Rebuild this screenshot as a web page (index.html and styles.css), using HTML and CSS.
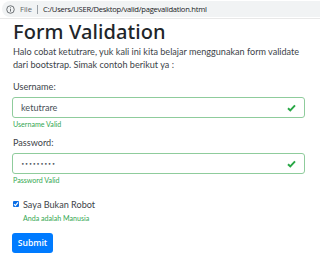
FILE: index.html
```html
<!DOCTYPE html>
<html>
<head>
<meta charset="utf-8">
<link rel="stylesheet" href="styles.css">
</head>
<body>
<div class="addrbar">
  <div class="pill">
    <svg class="info" width="9" height="9" viewBox="0 0 10 10"><circle cx="5" cy="5" r="4.2" fill="none" stroke="#5f6368" stroke-width="1"/><rect x="4.5" y="4.3" width="1" height="3" fill="#5f6368"/><rect x="4.5" y="2.6" width="1" height="1" fill="#5f6368"/></svg>
    <span class="scheme">File</span>
    <span class="sep"></span>
    <span class="url">C:/Users/USER/Desktop/valid/pagevalidation.html</span>
  </div>
</div>
<main class="container">
  <h2 class="title">Form Validation</h2>
  <p class="intro">Halo cobat ketutrare, yuk kali ini kita belajar menggunakan form validate dari bootstrap. Simak contoh berikut ya :</p>
  <div class="group">
    <label class="lbl">Username:</label>
    <div class="input"><span class="val">ketutrare</span><svg class="check" width="9" height="8" viewBox="0 0 9 8"><path d="M1 4.3 L3.3 6.5 L8 1.3" fill="none" stroke="#28a745" stroke-width="1.9"/></svg></div>
    <div class="feedback">Username Valid</div>
  </div>
  <div class="group second">
    <label class="lbl">Password:</label>
    <div class="input"><span class="val dots">•••••••••</span><svg class="check" width="9" height="8" viewBox="0 0 9 8"><path d="M1 4.3 L3.3 6.5 L8 1.3" fill="none" stroke="#28a745" stroke-width="1.9"/></svg></div>
    <div class="feedback">Password Valid</div>
  </div>
  <div class="checkrow">
    <span class="cbox"><svg width="6" height="6" viewBox="0 0 6 6"><path d="M1 3.2 L2.4 4.6 L5 1.4" fill="none" stroke="#fff" stroke-width="1.1"/></svg></span>
    <span class="cblabel">Saya Bukan Robot</span>
  </div>
  <div class="feedback indent">Anda adalah Manusia</div>
  <button class="btn">Submit</button>
</main>
</body>
</html>
```
FILE: styles.css
```css
html, body { margin: 0; padding: 0; background: #fff; }
body { font-family: "Open Sans", "Noto Sans", sans-serif; color: #212529; width: 320px; height: 266px; overflow: hidden; }
.addrbar { height: 19px; padding-top: 1px; box-sizing: border-box; border-bottom: 1px solid #e8e8e8; }
.pill { height: 16px; margin-left: 2px; background: #f1f3f4; border-radius: 8px 0 0 8px; display: flex; align-items: center; padding-left: 4px; font-size: 7.6px; }
.info { display: block; }
.scheme { color: #5f6368; margin-left: 5px; }
.sep { width: 1px; height: 9px; background: #9aa0a6; margin: 0 5px; }
.url { color: #202124; letter-spacing: -0.25px; }
.container { padding: 0 10px 0 13px; }
.title { font-size: 20px; font-weight: 500; margin: 1px 0 0; line-height: 24px; letter-spacing: 0.1px; font-family: "Noto Sans", "Open Sans", sans-serif; }
.intro { font-family: "Lato", "Open Sans", sans-serif; font-size: 9.1px; line-height: 12.5px; margin: 2px 0 0; color: #3d4349; }
.group { margin-top: 10px; }
.group.second { margin-top: 7px; }
.lbl { display: block; font-family: "Lato", "Open Sans", sans-serif; font-size: 9.1px; line-height: 12px; color: #3d4349; }
.input { margin-top: 4px; margin-left: -1px; margin-right: 5px; height: 21px; box-sizing: border-box; border: 1px solid #8fcc9c; border-radius: 3px; display: flex; align-items: center; justify-content: space-between; padding: 0 8px 0 8px; }
.val { font-family: "Lato", "Open Sans", sans-serif; font-size: 9.1px; color: #495057; }
.dots { font-family: "DejaVu Sans", sans-serif; letter-spacing: 0.3px; font-size: 6px; }
.check { display: block; }
.feedback { font-family: "Lato", "Open Sans", sans-serif; font-size: 7.1px; color: #34a853; margin-top: 2px; line-height: 10px; }
.checkrow { display: flex; align-items: center; margin-top: 12px; height: 12px; }
.cbox { width: 6px; height: 6px; background: #0a6ee6; border-radius: 1px; display: flex; align-items: center; justify-content: center; }
.cbox svg { display: block; }
.cblabel { font-family: "Lato", "Open Sans", sans-serif; font-size: 9.1px; margin-left: 4px; color: #3d4349; }
.indent { margin-left: 10px; margin-top: 4px; }
.btn { margin-top: 9px; margin-left: -1px; display: block; width: 41px; height: 20px; border: none; border-radius: 3px; background: #007bff; color: #fff; font-family: "Open Sans", sans-serif; font-size: 8.6px; font-weight: 600; padding: 0; }
```
